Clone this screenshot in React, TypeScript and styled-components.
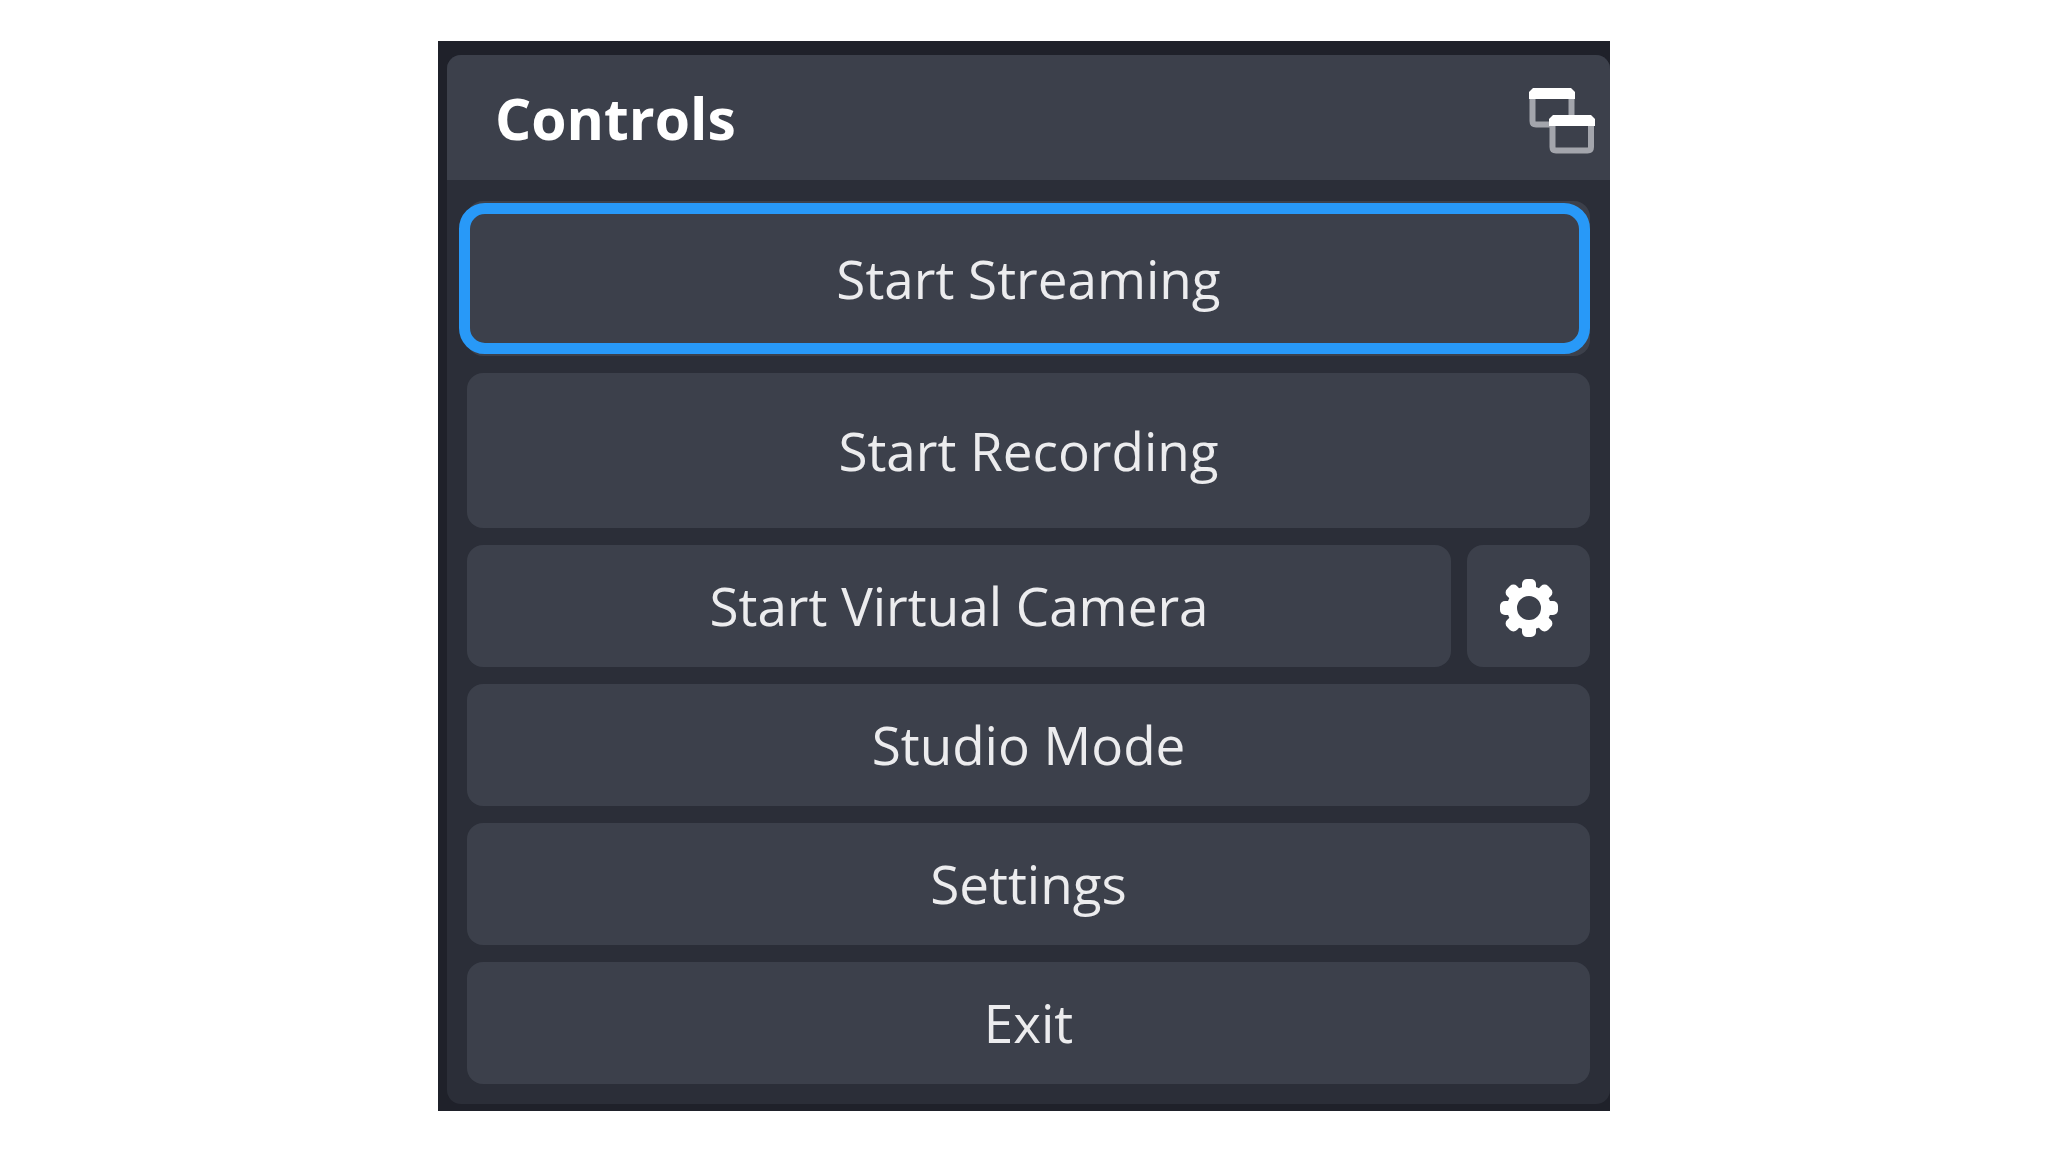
import React from 'react';
import styled, { createGlobalStyle } from 'styled-components';

const GlobalStyle = createGlobalStyle`
  *, *::before, *::after { box-sizing: border-box; }
  body {
    margin: 0;
    background: #ffffff;
    font-family: "Open Sans", "Noto Sans", sans-serif;
  }
`;

const Page = styled.main`
  display: flex;
  justify-content: center;
  padding: 41px 24px;
`;

const DockArea = styled.div`
  width: 100%;
  max-width: 1172px;
  padding: 14px 0 7px 9px;
  background: #1f212a;
`;

const Dock = styled.section`
  overflow: hidden;
  border-radius: 14px;
  background: #2b2e38;
`;

const DockHeader = styled.header`
  display: flex;
  align-items: center;
  justify-content: space-between;
  min-height: 125px;
  padding: 0 15px 0 48px;
  background: #3c404b;
`;

const DockTitle = styled.h1`
  margin: 0;
  color: #ffffff;
  font-size: 57px;
  line-height: 76px;
  font-weight: 700;
`;

const IconButton = styled.button`
  display: flex;
  padding: 6px 0 0;
  border: 0;
  background: none;
  cursor: pointer;
`;

const ControlList = styled.div`
  display: flex;
  flex-direction: column;
  gap: 17px;
  padding: 21px 20px 20px;
`;

const ControlRow = styled.div`
  display: flex;
  gap: 16px;
`;

const ControlButton = styled.button<{ $tall?: boolean; $highlighted?: boolean }>`
  position: relative;
  flex: 1 1 auto;
  display: flex;
  align-items: center;
  justify-content: center;
  min-height: ${({ $tall }) => ($tall ? 155 : 122)}px;
  padding: 0 16px;
  border: 0;
  border-radius: 16px;
  background: #3c404b;
  color: #ececee;
  font-family: inherit;
  font-size: 53px;
  line-height: 72px;
  cursor: pointer;

  &::after {
    content: "";
    display: ${({ $highlighted }) => ($highlighted ? 'block' : 'none')};
    position: absolute;
    inset: 2px 0 2px -8px;
    border: 11px solid #2899f8;
    border-radius: 26px;
  }
`;

const SquareButton = styled(ControlButton)`
  flex: 0 0 123px;
  padding: 4px 0 0;
`;

const UndockIcon = () => (
  <svg width="66" height="66" viewBox="0 0 66 66" fill="none" aria-hidden="true">
    <path d="M3.5 9V33Q3.5 36.500 7 36.500H21M42.500 9V27" stroke="#a3a5ac" strokeWidth="6" />
    <path d="M4 0H42L46 4V11H0V4Z" fill="#ffffff" />
    <path d="M23.500 35V59Q23.500 62.500 27 62.500H58.500Q62 62.500 62 59V35" stroke="#a3a5ac" strokeWidth="6" />
    <path d="M24 27H62L66 31V38H20V31Z" fill="#ffffff" />
  </svg>
);

const GearIcon = () => (
  <svg width="60" height="60" viewBox="-30 -30 60 60" aria-hidden="true">
    <circle r="17" fill="none" stroke="#ffffff" strokeWidth="10" />
    {[0, 45, 90, 135, 180, 225, 270, 315].map((angle) => (
      <rect
        key={angle}
        x="-7"
        y="-29"
        width="14"
        height="14"
        rx="5"
        fill="#ffffff"
        transform={`rotate(${angle})`}
      />
    ))}
  </svg>
);

export default function App() {
  return (
    <>
      <GlobalStyle />
      <Page>
        <DockArea>
          <Dock aria-labelledby="controls-title">
            <DockHeader>
              <DockTitle id="controls-title">Controls</DockTitle>
              <IconButton type="button" aria-label="Undock">
                <UndockIcon />
              </IconButton>
            </DockHeader>
            <ControlList>
              <ControlButton type="button" $tall $highlighted>Start Streaming</ControlButton>
              <ControlButton type="button" $tall>Start Recording</ControlButton>
              <ControlRow>
                <ControlButton type="button">Start Virtual Camera</ControlButton>
                <SquareButton type="button" aria-label="Configure virtual camera">
                  <GearIcon />
                </SquareButton>
              </ControlRow>
              <ControlButton type="button">Studio Mode</ControlButton>
              <ControlButton type="button">Settings</ControlButton>
              <ControlButton type="button">Exit</ControlButton>
            </ControlList>
          </Dock>
        </DockArea>
      </Page>
    </>
  );
}
